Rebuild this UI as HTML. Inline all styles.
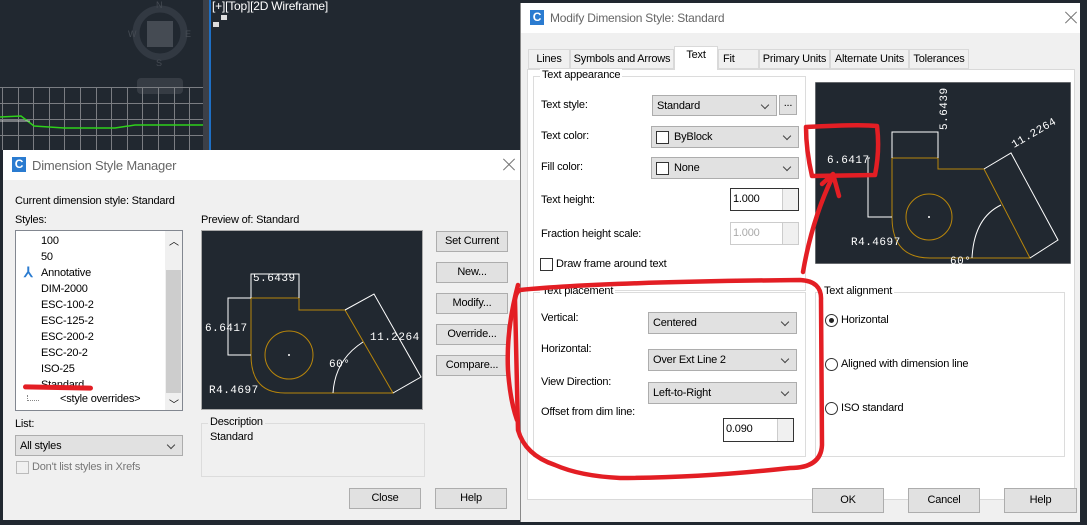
<!DOCTYPE html>
<html><head><style>
*{margin:0;padding:0;box-sizing:border-box}
body{width:1087px;height:525px;background:#212830;font-family:"Liberation Sans",sans-serif;font-size:11px;letter-spacing:-0.2px;color:#000;position:relative;overflow:hidden}
.a{position:absolute;white-space:nowrap}
.dlg{position:absolute;background:#f0f0f0}
.tb{position:absolute;left:0;right:0;top:0;height:30px;background:#fff}
.btn{position:absolute;background:#e1e1e1;border:1px solid #adadad;text-align:center;line-height:19px;white-space:nowrap}
.cmb{position:absolute;background:#e1e1e1;border:1px solid #adadad;padding-left:4px;line-height:20px;white-space:nowrap}
.cmb:after{content:"";position:absolute;right:8px;top:6px;width:5px;height:5px;border-right:1px solid #444;border-bottom:1px solid #444;transform:rotate(45deg)}
.grp{position:absolute;border:1px solid #dcdcdc}
.grp>span{position:absolute;top:-8px;left:6px;background:#f0f0f0;padding:0 2px;white-space:nowrap}
.spin{position:absolute;background:#fff;border:1px solid #7a7a7a;padding-left:2px;line-height:21px}
.spin i{position:absolute;right:0;top:0;bottom:0;width:16px;border-left:1px solid #ccc;background:#f0f0f0}
.tab{position:absolute;top:49px;height:20px;border:1px solid #d9d9d9;background:#f0f0f0;text-align:center;line-height:18px;white-space:nowrap;overflow:hidden}
.chk{position:absolute;width:13px;height:13px;border:1px solid #333;background:#fff}
.rad{position:absolute;width:13px;height:13px;border:1px solid #333;border-radius:50%;background:#fff}
.x{position:absolute;width:12px;height:12px}
.x:before,.x:after{content:"";position:absolute;left:-2px;top:5px;width:16px;height:1px;background:#777;transform:rotate(45deg)}
.x:after{transform:rotate(-45deg)}
</style></head><body>
<svg class="a" style="left:0;top:0" width="1087" height="525">
<circle cx="160" cy="33" r="24" fill="none" stroke="#323942" stroke-width="7"/>
<rect x="147" y="21" width="26" height="26" fill="#454b53"/>
<text x="156" y="8" fill="#454b53" font-size="9" font-family="Liberation Sans">N</text>
<text x="128" y="37" fill="#454b53" font-size="9" font-family="Liberation Sans">W</text>
<text x="185" y="37" fill="#454b53" font-size="9" font-family="Liberation Sans">E</text>
<text x="156" y="66" fill="#454b53" font-size="9" font-family="Liberation Sans">S</text>
<rect x="137" y="78" width="46" height="16" rx="4" fill="#363c44"/>
<g stroke="#7a7d82" stroke-width="1">
<line x1="0" y1="87.5" x2="203" y2="87.5"/><line x1="0" y1="103.5" x2="203" y2="103.5"/><line x1="0" y1="119.5" x2="203" y2="119.5"/><line x1="0" y1="135.5" x2="203" y2="135.5"/>
<line x1="2.5" y1="87" x2="2.5" y2="150"/><line x1="18.5" y1="87" x2="18.5" y2="150"/><line x1="33.5" y1="87" x2="33.5" y2="150"/><line x1="49.5" y1="87" x2="49.5" y2="150"/><line x1="64.5" y1="87" x2="64.5" y2="150"/><line x1="80.5" y1="87" x2="80.5" y2="150"/><line x1="96.5" y1="87" x2="96.5" y2="150"/><line x1="111.5" y1="87" x2="111.5" y2="150"/><line x1="127.5" y1="87" x2="127.5" y2="150"/><line x1="142.5" y1="87" x2="142.5" y2="150"/><line x1="158.5" y1="87" x2="158.5" y2="150"/><line x1="174.5" y1="87" x2="174.5" y2="150"/><line x1="189.5" y1="87" x2="189.5" y2="150"/>
</g>
<polyline points="0,117 21,116 34,126 64,128 115,128 135,125 203,125" fill="none" stroke="#2ed11a" stroke-width="1.5"/>
<polyline points="0,121 30,121" stroke="#ccc" fill="none"/>
<rect x="203" y="0" width="6" height="150" fill="#3c4048"/>
<rect x="209" y="0" width="2" height="525" fill="#1e6fc4"/>
<text x="212" y="10" fill="#fff" font-size="12" font-family="Liberation Sans">[+][Top][2D Wireframe]</text>
<rect x="221" y="15" width="6" height="5" fill="#ddd"/><rect x="213" y="22" width="6" height="5" fill="#ddd"/>
</svg>

<div class="dlg" style="left:3px;top:150px;width:520px;height:370px">
 <div class="tb"><div class="a" style="left:9px;top:7px;width:14px;height:15px;background:#2a7bd0;color:#fff;font-weight:bold;font-size:12px;text-align:center;line-height:15px">C</div><div class="a" style="left:29px;top:8px;font-size:13px;color:#666">Dimension Style Manager</div><div class="x" style="left:500px;top:9px"></div></div>
 <div class="a" style="left:12px;top:45px">Current dimension style: Standard</div>
 <div class="a" style="left:12px;top:64px">Styles:</div>
 <div class="a" style="left:12px;top:80px;width:168px;height:181px;background:#fff;border:1px solid #828790"></div>
 <div class="a" style="left:162px;top:81px;width:17px;height:179px;background:#f0f0f0"></div>
 <div class="a" style="left:163px;top:120px;width:15px;height:123px;background:#cdcdcd"></div>
 <div class="a" style="left:166px;top:83px;font-size:10px">︿</div><div class="a" style="left:166px;top:246px;font-size:10px">﹀</div>
 <div class="a" style="left:38px;top:83px;line-height:16px">100<br>50<br>Annotative<br>DIM-2000<br>ESC-100-2<br>ESC-125-2<br>ESC-200-2<br>ESC-20-2<br>ISO-25<br>Standard</div>
 <div class="a" style="left:21px;top:114px;color:#2a7bd0;font-size:14px;font-weight:bold">⅄</div>
 <div class="a" style="left:57px;top:243px">&lt;style overrides&gt;</div>
 <div class="a" style="left:24px;top:245px;width:12px;height:6px;border-left:1px dotted #888;border-bottom:1px dotted #888"></div>
 <div class="a" style="left:20px;top:235px;width:70px;height:5px;background:#e31e24;border-radius:3px;transform:rotate(1deg)"></div>
 <div class="a" style="left:198px;top:64px">Preview of: Standard</div>
 <svg class="a" style="left:198px;top:80px" width="222" height="180"><rect x="0.5" y="0.5" width="221" height="179" fill="#212830" stroke="#aaa"/>
  <g transform="translate(-198,-230)" font-family="Liberation Mono" font-size="11" fill="#fff" letter-spacing="0.5">
  <path d="M248,298H296V310H342L390,393H282Q248,393 248,355Z" fill="none" stroke="#b8860b"/>
  <circle cx="286" cy="355" r="24" fill="none" stroke="#b8860b"/><circle cx="286" cy="355" r="1" fill="#fff"/>
  <g stroke="#fff" fill="none"><path d="M248,298V274H296V298"/><path d="M248,298H225V355H248"/><path d="M342,310L371,294L418,377L390,393"/><path d="M330,393Q332,360 360,342"/></g>
  <text x="250" y="281">5.6439</text><text x="202" y="331">6.6417</text><text x="367" y="340">11.2264</text><text x="326" y="367">60°</text><text x="206" y="393">R4.4697</text></g></svg>
 <div class="btn" style="left:433px;top:81px;width:72px;height:21px">Set Current</div>
 <div class="btn" style="left:433px;top:112px;width:72px;height:21px">New...</div>
 <div class="btn" style="left:433px;top:143px;width:72px;height:21px">Modify...</div>
 <div class="btn" style="left:433px;top:174px;width:72px;height:21px">Override...</div>
 <div class="btn" style="left:433px;top:205px;width:72px;height:21px">Compare...</div>
 <div class="a" style="left:12px;top:268px">List:</div>
 <div class="cmb" style="left:12px;top:285px;width:168px;height:21px">All styles</div>
 <div class="chk" style="left:13px;top:311px;border-color:#bbb;background:#f0f0f0"></div>
 <div class="a" style="left:29px;top:311px;color:#777">Don't list styles in Xrefs</div>
 <div class="grp" style="left:198px;top:273px;width:224px;height:54px"><span>Description</span></div>
 <div class="a" style="left:207px;top:281px">Standard</div>
 <div class="btn" style="left:346px;top:338px;width:72px;height:21px">Close</div>
 <div class="btn" style="left:432px;top:338px;width:72px;height:21px">Help</div>
</div>
<div class="a" style="left:0;top:520px;width:520px;height:5px;background:#212830"></div>

<div class="dlg" style="left:520px;top:3px;width:560px;height:519px;border-left:1px solid #888">
 <div class="tb"><div class="a" style="left:9px;top:7px;width:14px;height:15px;background:#2a7bd0;color:#fff;font-weight:bold;font-size:12px;text-align:center;line-height:15px">C</div><div class="a" style="left:29px;top:8px;color:#666;font-size:12px">Modify Dimension Style: Standard</div><div class="x" style="left:544px;top:9px"></div></div>
</div>
<div class="a" style="left:527px;top:69px;width:548px;height:431px;background:#fff;border:1px solid #d9d9d9"></div>
<div class="tab" style="left:528px;width:42px">Lines</div>
<div class="tab" style="left:570px;width:104px">Symbols and Arrows</div>
<div class="tab" style="left:674px;width:44px;top:46px;height:24px;background:#fff;border-bottom:none;line-height:17px">Text</div>
<div class="tab" style="left:718px;width:41px;text-align:left;padding-left:4px">Fit</div>
<div class="tab" style="left:759px;width:71px">Primary Units</div>
<div class="tab" style="left:830px;width:79px">Alternate Units</div>
<div class="tab" style="left:909px;width:60px">Tolerances</div>

<div class="grp" style="left:533px;top:76px;width:273px;height:215px"><span style="background:#fff">Text appearance</span></div>
<div class="a" style="left:541px;top:99px">Text style:</div>
<div class="cmb" style="left:652px;top:95px;width:125px;height:21px">Standard</div>
<div class="btn" style="left:779px;top:95px;width:18px;height:20px;line-height:14px">...</div>
<div class="a" style="left:541px;top:130px">Text color:</div>
<div class="cmb" style="left:651px;top:126px;width:148px;height:22px;padding-left:22px">ByBlock</div><div class="chk" style="left:656px;top:131px"></div>
<div class="a" style="left:541px;top:161px">Fill color:</div>
<div class="cmb" style="left:651px;top:157px;width:148px;height:22px;padding-left:22px">None</div><div class="chk" style="left:656px;top:162px"></div>
<div class="a" style="left:541px;top:194px">Text height:</div>
<div class="spin" style="left:730px;top:188px;width:69px;height:23px;border-color:#333">1.000<i></i></div>
<div class="a" style="left:541px;top:228px">Fraction height scale:</div>
<div class="spin" style="left:730px;top:222px;width:69px;height:23px;color:#aaa;border-color:#ccc">1.000<i></i></div>
<div class="chk" style="left:540px;top:258px"></div>
<div class="a" style="left:556px;top:258px">Draw frame around text</div>

<svg class="a" style="left:815px;top:82px" width="256" height="182"><rect width="256" height="182" fill="#212830" stroke="#aaa"/>
 <g transform="translate(-815,-82)" font-family="Liberation Mono" font-size="11" fill="#fff" letter-spacing="0.5">
 <path d="M892,158H938V169H984L1030,258H930Q892,258 892,217Z" fill="none" stroke="#b8860b"/>
 <circle cx="929" cy="217" r="23" fill="none" stroke="#b8860b"/><circle cx="929" cy="217" r="1" fill="#fff"/>
 <g stroke="#fff" fill="none"><path d="M892,158V132H938V158"/><path d="M870,158H868V217H892"/><path d="M984,169L1011,153L1058,240L1030,258"/><path d="M972,258Q974,218 1001,205"/></g>
 <text x="827" y="163">6.6417</text><text transform="translate(947,130) rotate(-90)">5.6439</text><text transform="translate(1014,148) rotate(-30)">11.2264</text><text x="950" y="264">60°</text><text x="851" y="245">R4.4697</text></g></svg>

<div class="grp" style="left:533px;top:292px;width:273px;height:165px"><span style="background:#fff">Text placement</span></div>
<div class="a" style="left:541px;top:312px">Vertical:</div>
<div class="cmb" style="left:648px;top:312px;width:149px;height:22px">Centered</div>
<div class="a" style="left:541px;top:343px">Horizontal:</div>
<div class="cmb" style="left:648px;top:349px;width:149px;height:22px">Over Ext Line 2</div>
<div class="a" style="left:541px;top:376px">View Direction:</div>
<div class="cmb" style="left:648px;top:382px;width:149px;height:22px">Left-to-Right</div>
<div class="a" style="left:541px;top:406px">Offset from dim line:</div>
<div class="spin" style="left:723px;top:418px;width:71px;height:24px;border-color:#333">0.090<i></i></div>

<div class="grp" style="left:815px;top:292px;width:250px;height:165px"><span style="background:#fff">Text alignment</span></div>
<div class="rad" style="left:825px;top:314px"></div><div class="a" style="left:829px;top:318px;width:5px;height:5px;border-radius:50%;background:#222"></div>
<div class="a" style="left:841px;top:314px">Horizontal</div>
<div class="rad" style="left:825px;top:358px"></div><div class="a" style="left:841px;top:358px">Aligned with dimension line</div>
<div class="rad" style="left:825px;top:402px"></div><div class="a" style="left:841px;top:402px">ISO standard</div>

<div class="btn" style="left:812px;top:488px;width:72px;height:25px;line-height:23px">OK</div>
<div class="btn" style="left:908px;top:488px;width:72px;height:25px;line-height:23px">Cancel</div>
<div class="btn" style="left:1004px;top:488px;width:73px;height:25px;line-height:23px">Help</div>

<svg class="a" style="left:0;top:0" width="1087" height="525" fill="none" stroke="#e31e24" stroke-width="4.5" stroke-linecap="round" stroke-linejoin="round">
<path d="M520,290Q600,282 800,280Q822,281 821,300L822,445Q821,468 790,468Q700,478 620,478Q580,476 555,465Q525,455 518,430L515,300Q516,292 520,290Z"/>
<path d="M803,272Q812,220 832,178M822,184L833,174L839,196"/>
<path d="M806,127Q860,124 877,126Q880,150 875,175L812,176Q806,150 806,127Z"/>
<path d="M518,285Q506,330 508,370Q510,400 517,420"/>
</svg>
</body></html>
